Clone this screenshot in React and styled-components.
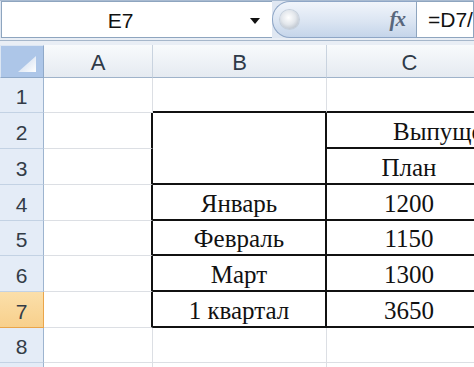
import React from 'react';
import styled, { createGlobalStyle } from 'styled-components';

const GlobalStyle = createGlobalStyle`
  html, body {
    margin: 0;
    padding: 0;
    background: #fff;
    overflow: hidden;
  }
  body {
    font-family: "Liberation Sans", Arial, sans-serif;
  }
`;

const Screen = styled.div`
  width: 474px;
  height: 367px;
  overflow: hidden;
  background: #fff;
`;

// ---- formula bar ----
const FormulaBar = styled.div`
  display: flex;
  height: 38px;
  box-sizing: border-box;
  background: #dfe7f2;
  border-top: 1px solid #a9bbd1;
`;

const NameBox = styled.div`
  display: flex;
  align-items: center;
  width: 271px;
  margin-left: 1px;
  box-sizing: border-box;
  background: #fff;
  border: 1px solid #8ea5bf;
  border-right: none;
`;

const NameText = styled.div`
  width: 237px;
  text-align: center;
  font-size: 21px;
  color: #111;
  padding-top: 2px;
`;

const Arrow = styled.div`
  margin-left: 11px;
  width: 0;
  height: 0;
  border-left: 5.5px solid transparent;
  border-right: 5.5px solid transparent;
  border-top: 6px solid #111;
  margin-top: 2px;
`;

const Pill = styled.div`
  display: flex;
  align-items: center;
  width: 144px;
  box-sizing: border-box;
  border: 1px solid #8ea6c6;
  border-right: none;
  border-radius: 18px 0 0 18px;
  background: linear-gradient(#f1f5fb, #dbe5f2 55%, #c5d5ea);
`;

const Knob = styled.div`
  width: 19px;
  height: 19px;
  margin-left: 7px;
  border-radius: 50%;
  background: radial-gradient(circle at 45% 40%, #ffffff 0%, #e3e7ec 45%, #a3adba 100%);
  box-shadow: 0 0 0 1px #c6d0dc;
`;

const Fx = styled.span`
  margin-left: auto;
  margin-right: 11px;
  font-family: "Liberation Serif", "Times New Roman", serif;
  font-style: italic;
  font-weight: bold;
  font-size: 21px;
  color: #58677d;
  letter-spacing: -1px;
`;

const FormulaInput = styled.div`
  flex: 1;
  display: flex;
  align-items: center;
  padding-left: 11px;
  background: #fff;
  border: 1px solid #8ea5bf;
  font-size: 21px;
  color: #111;
  white-space: nowrap;
  overflow: hidden;
`;

const Strip = styled.div`
  height: 7px;
  background: linear-gradient(to bottom, #e9eef5 0 2px, #a6b7cb 2px 3px, #e9eef5 3px);
`;

// ---- sheet ----
const Sheet = styled.div`
  display: grid;
  grid-template-columns: 44px 109px 174px 166px 166px;
  grid-template-rows: 33px 35px 36px 36px 36px 35px 36px 36px 35px 35px;
`;

const Corner = styled.div`
  position: relative;
  box-sizing: border-box;
  background: #adc6e8;
  border: 1px solid #dce6f3;
  border-right-color: #8fa9c9;
  border-bottom-color: #8fa9c9;

  &::after {
    content: '';
    position: absolute;
    right: 7px;
    bottom: 5px;
    width: 18px;
    height: 16px;
    background: linear-gradient(135deg, #c6d6ec, #ffffff);
    clip-path: polygon(100% 0, 100% 100%, 0 100%);
  }
`;

const ColHead = styled.div`
  box-sizing: border-box;
  display: flex;
  align-items: center;
  justify-content: center;
  padding-top: 3px;
  background: linear-gradient(#f8fafc, #e5eaf1);
  border-right: 1px solid #c9d3df;
  border-bottom: 1px solid #9fb3ca;
  font-size: 22px;
  color: #2f3a48;
`;

const RowHead = styled.div`
  box-sizing: border-box;
  display: flex;
  align-items: center;
  justify-content: center;
  padding-top: 4px;
  background: ${p => (p.$active ? 'linear-gradient(#fbdfaa, #f8d08c)' : '#e4ecf7')};
  border-right: 1px solid ${p => (p.$active ? '#eaa54a' : '#9db4cf')};
  border-bottom: 1px solid ${p => (p.$active ? '#eaa54a' : '#c3d2e4')};
  font-size: 21px;
  color: #333c47;
`;

const line = bold => (bold ? '2px solid #111' : '1px solid #dcdfe4');

const Cell = styled.div`
  box-sizing: border-box;
  display: flex;
  align-items: center;
  justify-content: ${p => (p.$start ? 'flex-start' : 'center')};
  padding-left: ${p => p.$indent || 0}px;
  padding-top: 3px;
  border-right: ${p => line(p.$br)};
  border-bottom: ${p => line(p.$bb)};
  grid-column: ${p => (p.$cols ? `span ${p.$cols}` : 'auto')};
  grid-row: ${p => (p.$rows ? `span ${p.$rows}` : 'auto')};
  font-family: "Liberation Serif", "Times New Roman", serif;
  font-size: 25px;
  color: #111;
  white-space: nowrap;
`;

const months = [
  ['Январь', '1200'],
  ['Февраль', '1150'],
  ['Март', '1300'],
  ['1 квартал', '3650'],
];

export default function App() {
  return (
    <Screen>
      <GlobalStyle />
      <FormulaBar>
        <NameBox>
          <NameText>E7</NameText>
          <Arrow />
        </NameBox>
        <Pill>
          <Knob />
          <Fx>fx</Fx>
        </Pill>
        <FormulaInput>=D7/C7</FormulaInput>
      </FormulaBar>
      <Strip />
      <Sheet>
        <Corner />
        <ColHead>A</ColHead>
        <ColHead>B</ColHead>
        <ColHead>C</ColHead>
        <ColHead>D</ColHead>

        <RowHead>1</RowHead>
        <Cell />
        <Cell $bb />
        <Cell $bb />
        <Cell $bb />

        <RowHead>2</RowHead>
        <Cell $br />
        <Cell $rows={2} $br $bb />
        <Cell $cols={2} $bb $start $indent={66}>Выпущено, шт.</Cell>

        <RowHead>3</RowHead>
        <Cell $br />
        <Cell $br $bb>План</Cell>
        <Cell $bb>Факт</Cell>

        {months.map(([name, plan], i) => (
          <React.Fragment key={name}>
            <RowHead $active={i === 3}>{i + 4}</RowHead>
            <Cell $br />
            <Cell $br $bb>{name}</Cell>
            <Cell $br $bb>{plan}</Cell>
            <Cell $bb />
          </React.Fragment>
        ))}

        {[8, 9].map(n => (
          <React.Fragment key={n}>
            <RowHead>{n}</RowHead>
            <Cell />
            <Cell />
            <Cell />
            <Cell />
          </React.Fragment>
        ))}
      </Sheet>
    </Screen>
  );
}
